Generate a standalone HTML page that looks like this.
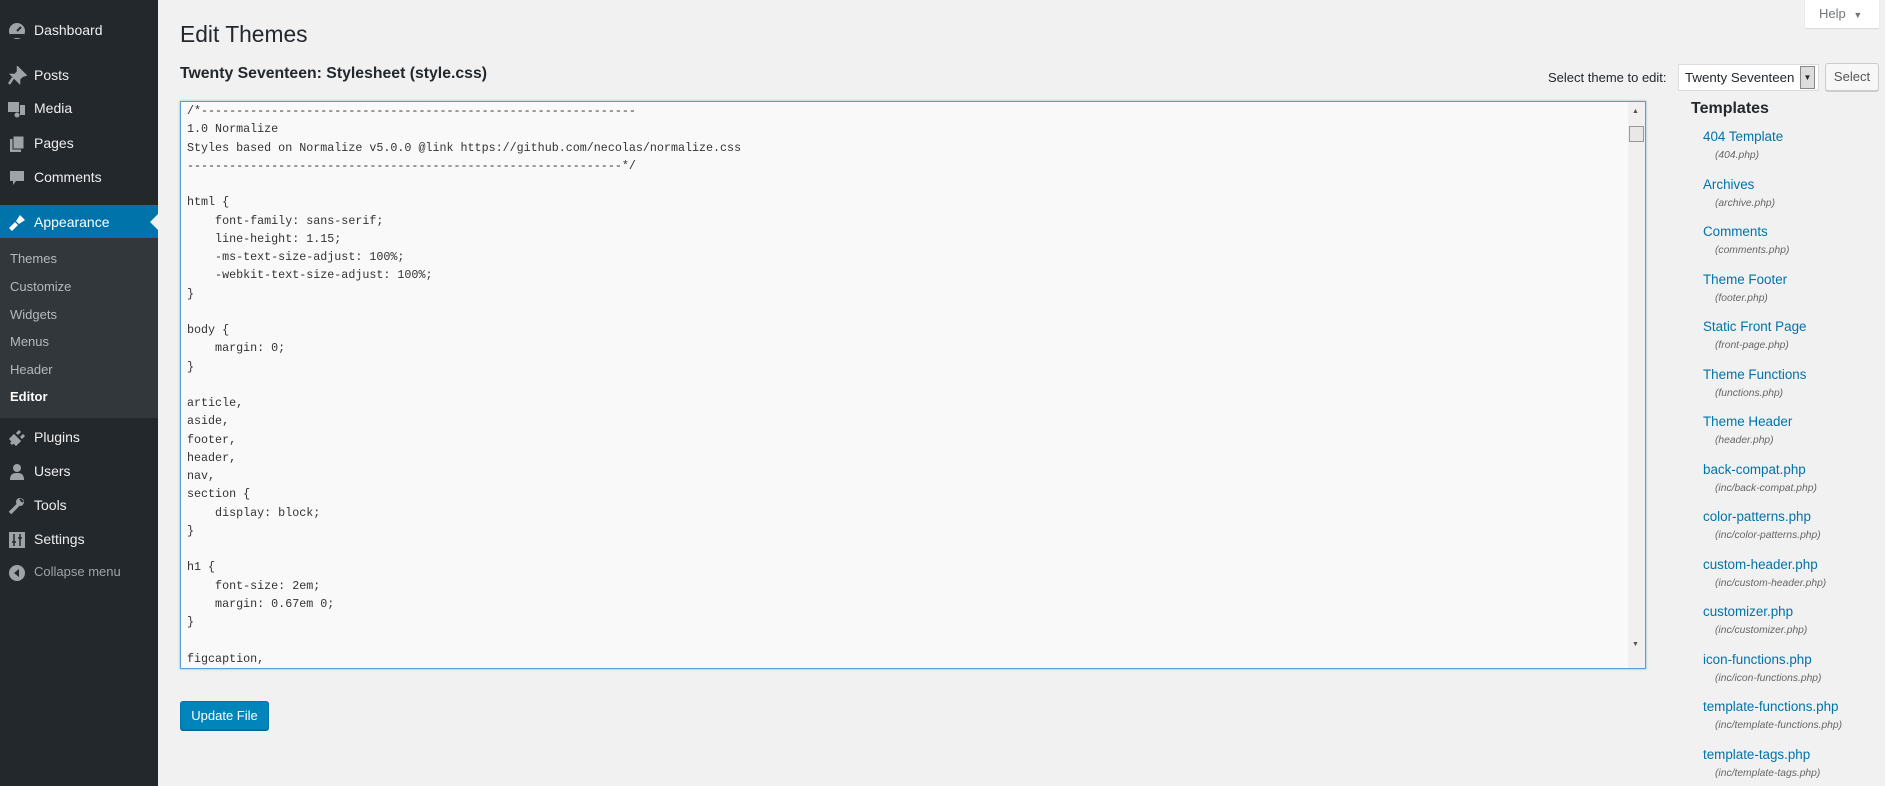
<!DOCTYPE html>
<html><head><meta charset="utf-8"><style>
*{box-sizing:border-box;margin:0;padding:0}
body{width:1885px;height:786px;background:#f1f1f1;font-family:"Liberation Sans",sans-serif;position:relative;overflow:hidden;color:#23282d}
#side{position:absolute;left:0;top:0;width:158px;height:786px;background:#23282d}
.mi{position:absolute;left:0;width:158px;color:#eee;font-size:14px;height:34px;line-height:34px}
.mi .t{position:absolute;left:34px}
.mi svg{position:absolute;left:7px;top:8px}
#app{position:absolute;left:0;top:205px;width:158px;height:33px;background:#0073aa}
#app:after{content:"";position:absolute;right:0;top:9px;border:8px solid transparent;border-right-color:#f1f1f1}
#sub{position:absolute;left:0;top:238px;width:158px;height:180px;background:#32373c}
.si{position:absolute;left:10px;font-size:13px;color:#b4b9be}
h1{position:absolute;left:180px;top:21px;font-size:22.8px;font-weight:400;color:#23282d}
h2{position:absolute;left:180px;top:65px;font-size:15.8px;font-weight:700}
#ta{position:absolute;left:180px;top:101px;width:1466px;height:568px;background:#f9f9f9;border:1px solid #5b9dd9;box-shadow:0 0 2px rgba(30,140,190,.6)}
pre{position:absolute;left:6px;top:0px;font-family:"Liberation Mono",monospace;font-size:11.7px;line-height:18.25px;color:#333}
#sb{position:absolute;right:0;top:0;width:17px;height:100%;background:#f0f0f0}
.tl{position:absolute;left:1703px;font-size:13.4px;color:#0073aa}
.ts{position:absolute;left:1715px;font-size:10.3px;font-style:italic;color:#666}
</style></head><body>
<div id="side">
<div id="app"></div><div id="sub"></div>
<div class="mi" style="top:13px"><svg width="20" height="20" viewBox="0 0 20 20"><circle cx="10" cy="10" r="8" fill="#9ea3a8"/><path d="M10 10l4-4" stroke="#23282d" stroke-width="2"/><rect x="3" y="13" width="14" height="4" fill="#23282d"/></svg><span class="t">Dashboard</span></div>
<div class="mi" style="top:58px"><svg width="20" height="20" viewBox="0 0 20 20"><path d="M11 2l7 7-3 1-3 3 0 3-7-7 3 0 3-3zM6 12l-4 6" stroke="#9ea3a8" stroke-width="2.5" fill="#9ea3a8"/></svg><span class="t">Posts</span></div>
<div class="mi" style="top:91px"><svg width="20" height="20" viewBox="0 0 20 20"><rect x="1" y="3" width="11" height="10" fill="#9ea3a8"/><rect x="13" y="6" width="5" height="10" fill="#9ea3a8"/><circle cx="10" cy="16" r="2.5" fill="#9ea3a8"/></svg><span class="t">Media</span></div>
<div class="mi" style="top:126px"><svg width="20" height="20" viewBox="0 0 20 20"><rect x="3" y="5" width="11" height="13" fill="#9ea3a8"/><rect x="6" y="2" width="11" height="13" fill="#9ea3a8" stroke="#23282d"/></svg><span class="t">Pages</span></div>
<div class="mi" style="top:160px"><svg width="20" height="20" viewBox="0 0 20 20"><path d="M3 3h14v10h-8l-3 4v-4h-3z" fill="#9ea3a8"/></svg><span class="t">Comments</span></div>
<div class="mi" style="top:205px;color:#fff"><svg width="20" height="20" viewBox="0 0 20 20"><path d="M13 2l5 5-6 4-3-3zM8 9l3 3-6 6-3-3z" fill="#fff"/></svg><span class="t">Appearance</span></div>
<div class="si" style="top:251px">Themes</div>
<div class="si" style="top:279px">Customize</div>
<div class="si" style="top:307px">Widgets</div>
<div class="si" style="top:334px">Menus</div>
<div class="si" style="top:362px">Header</div>
<div class="si" style="top:389px;color:#fff;font-weight:700">Editor</div>
<div class="mi" style="top:420px"><svg width="20" height="20" viewBox="0 0 20 20"><path d="M4 16l3-3 M7 8l5 5-3 3-5-5z M10 6l3-3 M14 10l3-3" stroke="#9ea3a8" stroke-width="3" fill="#9ea3a8"/></svg><span class="t">Plugins</span></div>
<div class="mi" style="top:454px"><svg width="20" height="20" viewBox="0 0 20 20"><circle cx="10" cy="6" r="4" fill="#9ea3a8"/><path d="M3 18c0-6 3-7 7-7s7 1 7 7z" fill="#9ea3a8"/></svg><span class="t">Users</span></div>
<div class="mi" style="top:488px"><svg width="20" height="20" viewBox="0 0 20 20"><path d="M3 17l8-8" stroke="#9ea3a8" stroke-width="3.5"/><circle cx="13" cy="6" r="4" fill="#9ea3a8"/><path d="M13 3l3 3" stroke="#23282d" stroke-width="2"/></svg><span class="t">Tools</span></div>
<div class="mi" style="top:522px"><svg width="20" height="20" viewBox="0 0 20 20"><rect x="2" y="2" width="16" height="16" fill="#9ea3a8"/><path d="M7 4v12M13 4v12M5 12h4M11 8h4" stroke="#23282d" stroke-width="1.5"/></svg><span class="t">Settings</span></div>
<div class="mi" style="top:555px;color:#9ea3a8;font-size:13px"><svg width="20" height="20" viewBox="0 0 20 20"><circle cx="10" cy="10" r="8" fill="#9ea3a8"/><path d="M12 6v8l-5-4z" fill="#23282d"/></svg><span class="t">Collapse menu</span></div>
</div>

<div style="position:absolute;left:1805px;top:0;width:74px;height:28px;background:#fff;box-shadow:0 1px 1px rgba(0,0,0,.1);font-size:13px;color:#72777c;line-height:28px;padding-left:14px">Help <span style="font-size:9px;margin-left:4px">▼</span></div>

<h1>Edit Themes</h1>
<h2>Twenty Seventeen: Stylesheet (style.css)</h2>

<div style="position:absolute;left:1548px;top:70px;font-size:13px;color:#23282d">Select theme to edit:</div>
<div style="position:absolute;left:1678px;top:64px;width:141px;height:27px;background:#fff;border:1px solid #ddd;font-size:13.3px;line-height:25px;padding-left:6px;white-space:nowrap;overflow:hidden">Twenty Seventeen<div style="position:absolute;right:3px;top:1px;width:15px;height:23px;background:#ddd;border:1px solid #888;font-size:8px;text-align:center;line-height:21px">▼</div></div>
<div style="position:absolute;left:1825px;top:63px;width:54px;height:28px;background:#f7f7f7;border:1px solid #ccc;border-radius:3px;font-size:13px;color:#555;line-height:26px;text-align:center;box-shadow:0 1px 0 #ccc">Select</div>

<div id="ta"><pre>/*--------------------------------------------------------------
1.0 Normalize
Styles based on Normalize v5.0.0 @link https://github.com/necolas/normalize.css
--------------------------------------------------------------*/

html {
    font-family: sans-serif;
    line-height: 1.15;
    -ms-text-size-adjust: 100%;
    -webkit-text-size-adjust: 100%;
}

body {
    margin: 0;
}

article,
aside,
footer,
header,
nav,
section {
    display: block;
}

h1 {
    font-size: 2em;
    margin: 0.67em 0;
}

figcaption,</pre>
<div id="sb"><div style="position:absolute;left:4px;top:6px;font-size:7px;color:#555">▲</div><div style="position:absolute;left:1px;top:24px;width:15px;height:16px;background:#e8e8e8;border:1px solid #999"></div><div style="position:absolute;left:4px;bottom:20px;font-size:7px;color:#555">▼</div></div>
</div>

<div style="position:absolute;left:180px;top:701px;width:89px;height:29px;background:#0085ba;border:1px solid #0073aa;border-radius:3px;color:#fff;font-size:13px;line-height:27px;text-align:center;box-shadow:0 1px 0 #006799">Update File</div>

<div style="position:absolute;left:1691px;top:100px;font-size:16px;font-weight:700">Templates</div>
<div class="tl" style="top:129px">404 Template</div><div class="ts" style="top:150px">(404.php)</div>
<div class="tl" style="top:177px">Archives</div><div class="ts" style="top:198px">(archive.php)</div>
<div class="tl" style="top:224px">Comments</div><div class="ts" style="top:245px">(comments.php)</div>
<div class="tl" style="top:272px">Theme Footer</div><div class="ts" style="top:293px">(footer.php)</div>
<div class="tl" style="top:319px">Static Front Page</div><div class="ts" style="top:340px">(front-page.php)</div>
<div class="tl" style="top:367px">Theme Functions</div><div class="ts" style="top:388px">(functions.php)</div>
<div class="tl" style="top:414px">Theme Header</div><div class="ts" style="top:435px">(header.php)</div>
<div class="tl" style="top:462px">back-compat.php</div><div class="ts" style="top:483px">(inc/back-compat.php)</div>
<div class="tl" style="top:509px">color-patterns.php</div><div class="ts" style="top:530px">(inc/color-patterns.php)</div>
<div class="tl" style="top:557px">custom-header.php</div><div class="ts" style="top:578px">(inc/custom-header.php)</div>
<div class="tl" style="top:604px">customizer.php</div><div class="ts" style="top:625px">(inc/customizer.php)</div>
<div class="tl" style="top:652px">icon-functions.php</div><div class="ts" style="top:673px">(inc/icon-functions.php)</div>
<div class="tl" style="top:699px">template-functions.php</div><div class="ts" style="top:720px">(inc/template-functions.php)</div>
<div class="tl" style="top:747px">template-tags.php</div><div class="ts" style="top:768px">(inc/template-tags.php)</div>
</body></html>
